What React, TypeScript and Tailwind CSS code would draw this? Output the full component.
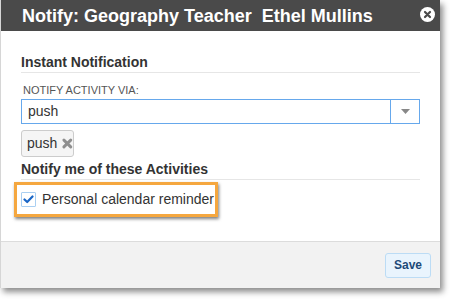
import React from "react";

export default function App() {
  return (
    <div className="w-[451px] h-[300px] bg-white" style={{ fontFamily: '"Liberation Sans", Arial, sans-serif' }}>
      <div className="w-[440px] flex flex-col bg-white border-l border-[#d6d6d6] shadow-[3px_4px_6px_rgba(0,0,0,0.45)]">
        <div className="h-[31px] bg-[#4a4a4a] flex items-center pl-[21px] pr-[6px] relative">
          <span className="text-white font-bold text-[18px] leading-none whitespace-pre">Notify: Geography Teacher  Ethel Mullins</span>
          <div className="absolute left-[419px] top-[7px] w-[15px] h-[15px] rounded-full bg-white flex items-center justify-center">
            <svg width="9" height="9" viewBox="0 0 9 9">
              <path d="M2 2 L7 7 M7 2 L2 7" stroke="#4a4a4a" strokeWidth="2.2" strokeLinecap="round" />
            </svg>
          </div>
        </div>
        <div className="px-[20px] pb-[24px] flex flex-col">
          <div className="mt-[22px] text-[14px] leading-[19px] font-bold text-[#333] border-b border-[#e6e6e6]">Instant Notification</div>
          <div className="mt-[10px] text-[11px] leading-[14px] text-[#555] pl-[2px]">NOTIFY ACTIVITY VIA:</div>
          <div className="mt-[2px] h-[25px] border border-[#66a8ec] flex">
            <div className="flex-1 flex items-center pl-[6px] text-[14px] text-[#333]">push</div>
            <div className="w-[29px] border-l border-[#66a8ec] flex items-center justify-center">
              <svg width="9" height="5" viewBox="0 0 9 5"><path d="M0 0 L9 0 L4.5 5 Z" fill="#888" /></svg>
            </div>
          </div>
          <div className="mt-[6px] flex">
            <div className="h-[27px] w-[53px] border border-[#ccc] bg-[#f5f5f5] rounded-[3px] flex items-center pl-[5px] gap-[5px] text-[14px] text-[#333]">
              <span>push</span>
              <svg width="11" height="11" viewBox="0 0 11 11">
                <path d="M2 2 L9 9 M9 2 L2 9" stroke="#8f8f8f" strokeWidth="3" strokeLinecap="round" />
              </svg>
            </div>
          </div>
          <div className="mt-[3px] text-[14px] leading-[19px] font-bold text-[#333] border-b border-[#e6e6e6]">Notify me of these Activities</div>
          <div className="mt-[2px] flex">
            <div className="-ml-[7px] w-[204px] h-[35px] border-[3px] border-[#f5a73f] bg-white flex items-center pl-[4px] gap-[6px] shadow-[1px_2px_3px_rgba(0,0,0,0.5)]">
              <div className="w-[15px] h-[15px] border border-[#a9cff2] bg-white flex items-center justify-center rounded-[1px]">
                <svg width="11" height="9" viewBox="0 0 11 9">
                  <path d="M1.5 4.5 L4.2 7 L9.5 1.5" stroke="#1a66c6" strokeWidth="2.2" fill="none" strokeLinecap="round" strokeLinejoin="round" />
                </svg>
              </div>
              <span className="text-[14px] text-[#333]">Personal calendar reminder</span>
            </div>
          </div>
        </div>
        <div className="h-[47px] bg-[#f2f2f2] border-t border-[#dcdcdc] flex items-center justify-end pr-[9px]">
          <button className="w-[46px] h-[25px] rounded-[3px] bg-[#e9f4fd] border border-[#bcdcf5] text-[12px] font-bold text-[#1d4a78]">Save</button>
        </div>
      </div>
    </div>
  );
}
